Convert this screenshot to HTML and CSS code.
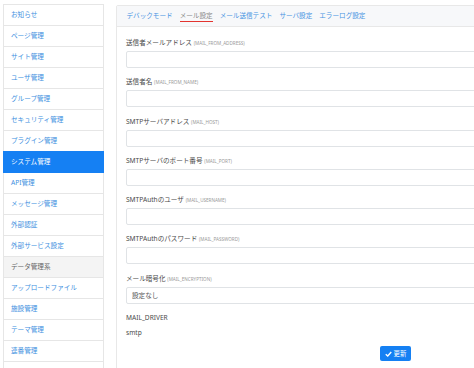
FILE: index.html
```html
<!DOCTYPE html>
<html lang="ja">

<head>
    <meta charset="UTF-8">
    <title>システム管理</title>
    <link rel="stylesheet" href="styles.css">
</head>

<body>
    <div class="layout">
        <ul class="side-menu">
            <li><a href="#">お知らせ</a></li>
            <li><a href="#">ページ管理</a></li>
            <li><a href="#">サイト管理</a></li>
            <li><a href="#">ユーザ管理</a></li>
            <li><a href="#">グループ管理</a></li>
            <li><a href="#">セキュリティ管理</a></li>
            <li><a href="#">プラグイン管理</a></li>
            <li class="active"><a href="#">システム管理</a></li>
            <li><a href="#">API管理</a></li>
            <li><a href="#">メッセージ管理</a></li>
            <li><a href="#">外部認証</a></li>
            <li><a href="#">外部サービス設定</a></li>
            <li class="menu-header">データ管理系</li>
            <li><a href="#">アップロードファイル</a></li>
            <li><a href="#">施設管理</a></li>
            <li><a href="#">テーマ管理</a></li>
            <li><a href="#">連番管理</a></li>
            <li></li>
        </ul>

        <div class="card">
            <div class="card-header">
                <a href="#" class="tab">デバックモード</a>
                <span class="tab current">メール設定</span>
                <a href="#" class="tab">メール送信テスト</a>
                <a href="#" class="tab">サーバ設定</a>
                <a href="#" class="tab">エラーログ設定</a>
            </div>
            <form class="card-body">
                <div class="form-group">
                    <label>送信者メールアドレス <small>(MAIL_FROM_ADDRESS)</small></label>
                    <input type="text" class="form-control">
                </div>
                <div class="form-group">
                    <label>送信者名 <small>(MAIL_FROM_NAME)</small></label>
                    <input type="text" class="form-control">
                </div>
                <div class="form-group">
                    <label>SMTPサーバアドレス <small>(MAIL_HOST)</small></label>
                    <input type="text" class="form-control">
                </div>
                <div class="form-group">
                    <label>SMTPサーバのポート番号 <small>(MAIL_PORT)</small></label>
                    <input type="text" class="form-control">
                </div>
                <div class="form-group">
                    <label>SMTPAuthのユーザ <small>(MAIL_USERNAME)</small></label>
                    <input type="text" class="form-control">
                </div>
                <div class="form-group">
                    <label>SMTPAuthのパスワード <small>(MAIL_PASSWORD)</small></label>
                    <input type="password" class="form-control">
                </div>
                <div class="form-group">
                    <label>メール暗号化 <small>(MAIL_ENCRYPTION)</small></label>
                    <select class="form-control">
                        <option>設定なし</option>
                        <option>tls</option>
                        <option>ssl</option>
                    </select>
                </div>
                <div class="plain-label">MAIL_DRIVER</div>
                <div class="plain-value">smtp</div>
                <div class="form-actions">
                    <button type="button" class="btn-primary">
                        <svg width="7" height="6" viewBox="0 0 14 12"><polyline points="1.5,6.5 5.5,10 12.5,2" fill="none" stroke="#fff" stroke-width="2.8"/></svg>
                        更新
                    </button>
                </div>
            </form>
        </div>
    </div>
</body>

</html>
```

FILE: styles.css
```css
html, body {
    margin: 0;
    overflow: hidden;
    background: #fff;
}

body {
    font-family: "Noto Sans", "Noto Sans CJK JP", sans-serif;
    font-size: 6.6px;
    color: #4a4a4a;
}

.layout {
    display: flex;
    align-items: flex-start;
    width: 680px;
    padding: 4px 0 0 3px;
}

.side-menu {
    list-style: none;
    margin: 0;
    padding: 0;
    width: 101px;
    flex-shrink: 0;
}

.side-menu li {
    border: 1px solid #e6e6e6;
    margin-bottom: -1px;
    padding: 5px 7px;
    line-height: 10px;
    height: 10px;
}

.side-menu a {
    color: #3d8fe0;
    text-decoration: none;
}

.side-menu li.active {
    background-color: #1580f3;
    border-color: #1580f3;
    position: relative;
}

.side-menu li.active a {
    color: #fff;
}

.side-menu .menu-header {
    background-color: #f4f4f4;
    color: #666;
}

.card {
    margin-left: 12px;
    margin-top: 1px;
    width: 557px;
    height: 420px;
    border: 1px solid #e8e8e8;
    border-radius: 2px;
}

.card-header {
    background-color: #f7f8fa;
    border-bottom: 1px solid #e8e8e8;
    height: 20px;
    display: flex;
    align-items: center;
    padding-left: 6px;
}

.tab {
    color: #4693e2;
    text-decoration: none;
    padding: 0 3.5px;
    line-height: 10px;
    font-size: 6.6px;
}

.tab.current {
    color: #888;
    padding: 0;
    margin: 1px 3.5px 0;
    border-bottom: 1px solid #e3342f;
}

.card-body {
    padding: 11px 9px 0 9px;
    margin: 0;
}

.form-group {
    margin-bottom: 9.3px;
}

.form-group label {
    display: block;
    line-height: 10px;
    margin-bottom: 3px;
    color: #4a4a4a;
}

.form-group small {
    font-size: 4.6px;
    color: #999;
}

.form-control {
    display: block;
    box-sizing: border-box;
    width: 100%;
    height: 17px;
    margin: 0;
    border: 1px solid #e0e3e6;
    border-radius: 2px;
    background: #fff;
    font-family: inherit;
    font-size: 6.6px;
    color: #555;
    padding: 0 5px;
}

select.form-control {
    appearance: none;
    -webkit-appearance: none;
}

.plain-label {
    line-height: 10px;
}

.plain-value {
    line-height: 10px;
    margin-top: 5px;
}

.form-actions {
    text-align: center;
    margin-top: 8px;
}

.btn-primary {
    background-color: #1580f3;
    color: #fff;
    border: none;
    border-radius: 2px;
    height: 15px;
    width: 31px;
    padding: 0;
    font-family: inherit;
    font-size: 6.4px;
    cursor: pointer;
    display: inline-flex;
    align-items: center;
    justify-content: center;
    gap: 2px;
}
```
